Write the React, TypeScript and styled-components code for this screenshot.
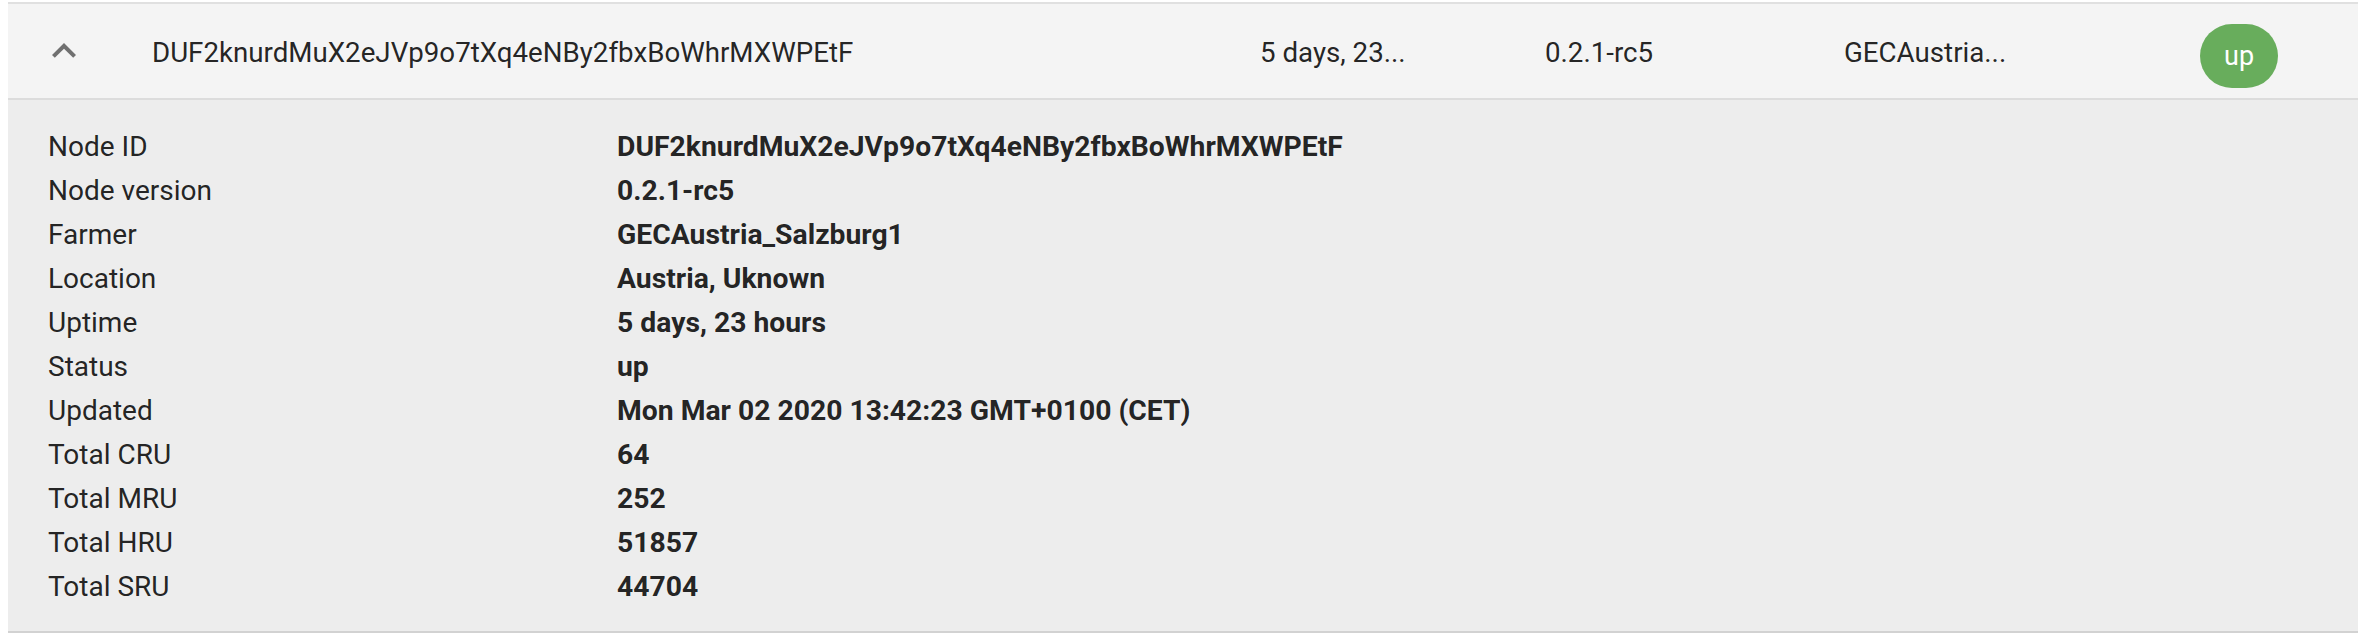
import React from "react";
import styled, { createGlobalStyle } from "styled-components";

const GlobalStyle = createGlobalStyle`
  html, body {
    margin: 0;
    padding: 0;
    background: #ffffff;
  }
  body {
    padding: 2px 8px 0;
    font-family: Roboto, "Liberation Sans", Arial, sans-serif;
    color: rgba(0, 0, 0, 0.87);
  }
`;

const Table = styled.div`
  border-top: 2px solid #e0e0e0;
`;

const HeaderRow = styled.div`
  display: grid;
  grid-template-columns: 144px 1108px 285px 299px 356px 1fr;
  align-items: center;
  height: 94px;
  background: #f4f4f4;
  border-bottom: 2px solid #dcdcdc;
`;

const IconCell = styled.div`
  display: flex;
  align-items: center;
  padding-left: 32px;
`;

const Cell = styled.div`
  font-size: 27.7px;
  line-height: 44px;
  padding-top: 4px;
  white-space: nowrap;
  overflow: hidden;
`;

const ChipCell = styled.div`
  display: flex;
  align-items: center;
  padding-top: 10px;
`;

const Chip = styled.span<{ $color: string }>`
  display: inline-flex;
  align-items: center;
  justify-content: center;
  height: 64px;
  padding: 0 24px;
  border-radius: 32px;
  background: ${(p) => p.$color};
  color: #ffffff;
  font-size: 27px;
  line-height: 1;
`;

const Detail = styled.div`
  background: #ededed;
  padding: 24px 40px 23px;
  border-bottom: 2px solid #d2d2d2;
`;

const DetailGrid = styled.div`
  display: grid;
  grid-template-columns: 569px 1fr;
  grid-auto-rows: 44px;
  align-items: center;
  font-size: 28px;
`;

const Label = styled.div`
  font-weight: 400;
  white-space: nowrap;
`;

const Value = styled.div`
  font-weight: 700;
  font-size: 28.3px;
  white-space: nowrap;
`;

const ChevronUp = () => (
  <svg width="48" height="48" viewBox="0 0 24 24" aria-hidden="true">
    <path
      fill="rgba(0,0,0,0.54)"
      d="M12 8l-6 6 1.41 1.41L12 10.83l4.59 4.58L18 14z"
    />
  </svg>
);

const node = {
  id: "DUF2knurdMuX2eJVp9o7tXq4eNBy2fbxBoWhrMXWPEtF",
  version: "0.2.1-rc5",
  farmer: "GECAustria_Salzburg1",
  location: "Austria, Uknown",
  uptime: "5 days, 23 hours",
  status: "up",
  updated: "Mon Mar 02 2020 13:42:23 GMT+0100 (CET)",
  cru: 64,
  mru: 252,
  hru: 51857,
  sru: 44704,
};

const truncate = (s: string, n = 10) => (s.length > n ? s.slice(0, n) + "..." : s);

export default function App() {
  const rows: [string, string | number][] = [
    ["Node ID", node.id],
    ["Node version", node.version],
    ["Farmer", node.farmer],
    ["Location", node.location],
    ["Uptime", node.uptime],
    ["Status", node.status],
    ["Updated", node.updated],
    ["Total CRU", node.cru],
    ["Total MRU", node.mru],
    ["Total HRU", node.hru],
    ["Total SRU", node.sru],
  ];
  return (
    <>
      <GlobalStyle />
      <Table>
        <HeaderRow>
          <IconCell>
            <ChevronUp />
          </IconCell>
          <Cell>{node.id}</Cell>
          <Cell>{truncate(node.uptime)}</Cell>
          <Cell>{node.version}</Cell>
          <Cell>{truncate(node.farmer)}</Cell>
          <ChipCell>
            <Chip $color="#68ad5c">{node.status}</Chip>
          </ChipCell>
        </HeaderRow>
        <Detail>
          <DetailGrid>
            {rows.map(([k, v]) => (
              <React.Fragment key={k}>
                <Label>{k}</Label>
                <Value>{v}</Value>
              </React.Fragment>
            ))}
          </DetailGrid>
        </Detail>
      </Table>
    </>
  );
}
